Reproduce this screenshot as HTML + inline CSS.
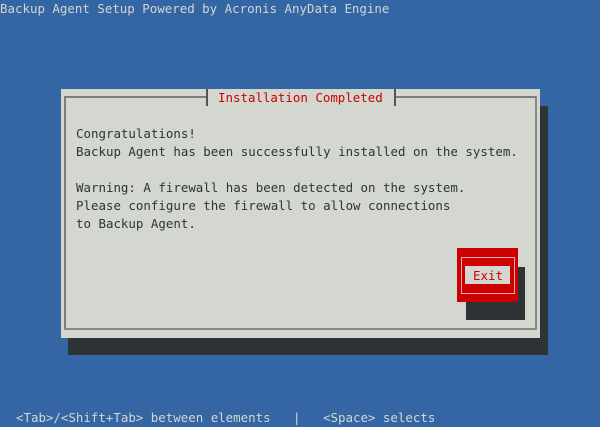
<!DOCTYPE html>
<html><head><style>
body{margin:0;width:600px;height:426px;background:#3465a4;position:relative;overflow:hidden;font-family:"DejaVu Sans Mono","Liberation Mono",monospace;font-size:12.45px;}
.t{position:absolute;white-space:pre;line-height:18px;}
div{position:absolute;box-sizing:border-box;}
</style></head><body>
<span class="t" style="left:0;top:0;color:#d3d7cf">Backup Agent Setup Powered by Acronis AnyData Engine</span>
<div style="left:68px;top:106px;width:480px;height:249px;background:#2e3436"></div>
<div style="left:61px;top:89px;width:479px;height:249px;background:#d3d7cf"></div>
<div style="left:64px;top:96px;width:473px;height:234px;border:2px solid #7a7d78;border-right-color:#888a85;border-bottom-color:#888a85;"></div>
<div style="left:206px;top:89px;width:190px;height:17px;background:#d3d7cf;border-left:2px solid #555;border-right:2px solid #555"></div>
<span class="t" style="left:218px;top:89px;color:#cc0000">Installation Completed</span>
<span class="t" style="left:76px;top:125px;color:#2e3436">Congratulations!
Backup Agent has been successfully installed on the system.

Warning: A firewall has been detected on the system.
Please configure the firewall to allow connections
to Backup Agent.</span>
<div style="left:466px;top:267px;width:59px;height:53px;background:#2e3436"></div>
<div style="left:457px;top:248px;width:61px;height:54px;background:#cc0000"></div>
<div style="left:461px;top:257px;width:54px;height:37px;border:1px solid #e8b0b0"></div>
<div style="left:465px;top:266px;width:45px;height:18px;background:#d3d7cf"></div>
<span class="t" style="left:473px;top:267px;color:#cc0000">Exit</span>
<span class="t" style="left:16px;top:409px;color:#d3d7cf">&lt;Tab&gt;/&lt;Shift+Tab&gt; between elements   |   &lt;Space&gt; selects</span>
</body></html>
